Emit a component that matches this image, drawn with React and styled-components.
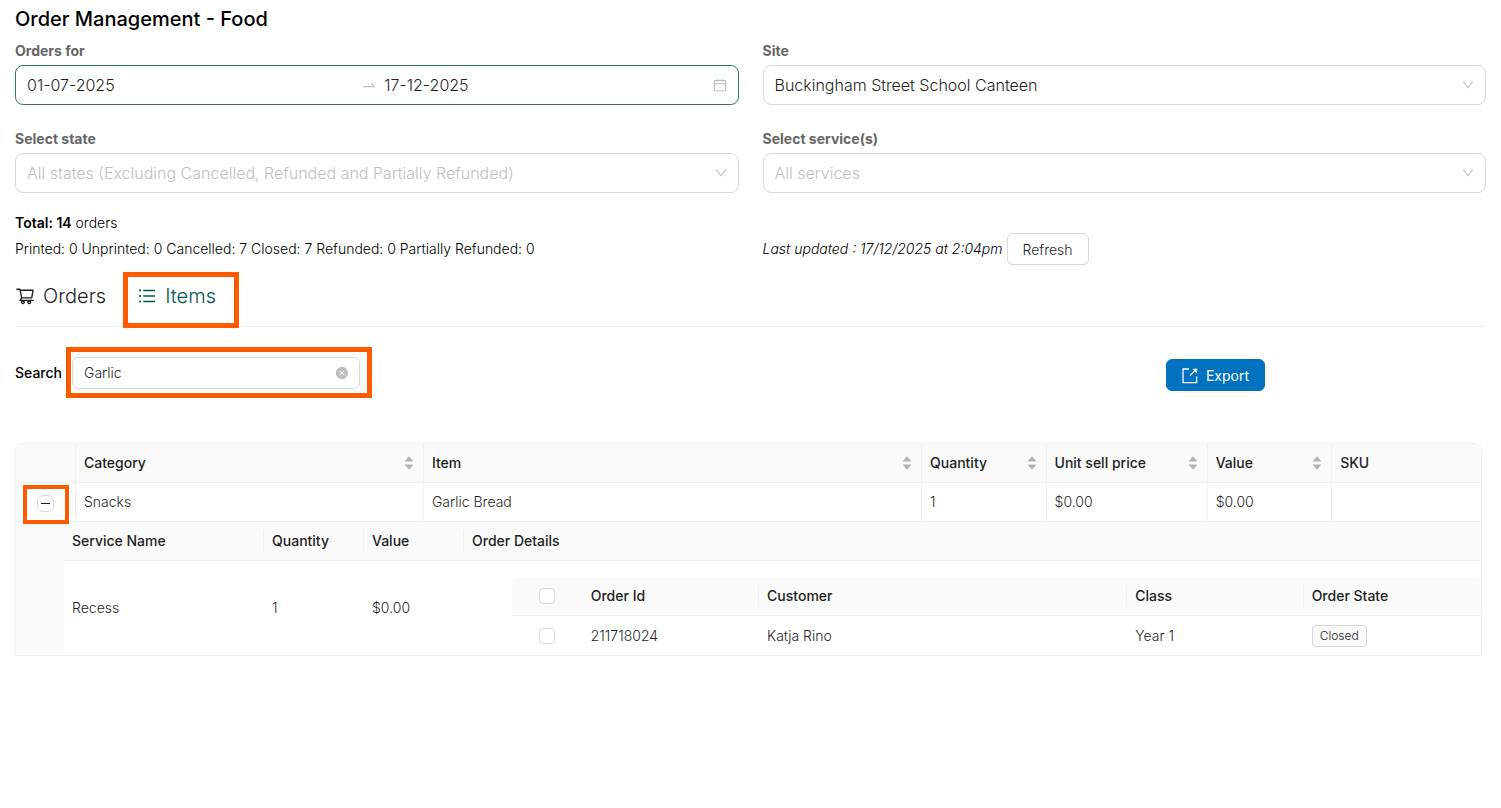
import React, { useState } from 'react';
import styled, { createGlobalStyle } from 'styled-components';
import {
  AiFillCaretDown,
  AiFillCaretUp,
  AiFillCloseCircle,
  AiOutlineCalendar,
  AiOutlineDown,
  AiOutlineShoppingCart,
  AiOutlineSwapRight,
  AiOutlineUnorderedList,
} from 'react-icons/ai';

const GlobalStyle = createGlobalStyle`
  *, *::before, *::after {
    box-sizing: border-box;
  }

  body {
    margin: 0;
    background: #fff;
    color: #000;
    font-family: Inter, 'Open Sans', sans-serif;
    font-size: 14px;
    font-weight: 300;
    line-height: 22px;
  }

  button, input, select {
    font: inherit;
    color: inherit;
  }
`;

const Page = styled.main`
  padding: 4px 15px 24px;
`;

const Title = styled.h1`
  margin: 0;
  font-size: 20px;
  font-weight: 500;
  line-height: 30px;
`;

const Filters = styled.div`
  display: grid;
  grid-template-columns: 1fr 1fr;
  gap: 20px 24px;
  padding-top: 3px;
`;

const Field = styled.div`
  display: flex;
  flex-direction: column;
`;

const FieldLabel = styled.label`
  padding: 3px 0;
  color: #666;
  font-weight: 700;
`;

const Control = styled.div`
  display: flex;
  align-items: center;
  height: 40px;
  padding: 0 10px 0 11px;
  border: 1px solid ${({ $active }) => ($active ? '#33786f' : '#d9d9d9')};
  border-radius: 8px;
  color: ${({ $placeholder }) => ($placeholder ? '#bfbfbf' : '#1f1f1f')};
  font-size: 16px;

  > svg {
    flex: none;
    color: #bfbfbf;
  }
`;

const PlainInput = styled.input`
  flex: 1;
  min-width: 0;
  padding: 0;
  border: 0;
  outline: 0;
  background: transparent;
`;

const SelectBox = styled.select`
  flex: 1;
  min-width: 0;
  height: 100%;
  padding: 0;
  border: 0;
  outline: 0;
  background: transparent;
  appearance: none;
`;

const RangeArrow = styled.span`
  display: flex;
  padding: 0 7px;
  color: #bfbfbf;
`;

const Summary = styled.div`
  display: grid;
  grid-template-columns: 1fr 1fr;
  gap: 24px;
  align-items: start;
  padding-top: 17px;

  p {
    margin: 0;
    line-height: 26px;
  }

  strong {
    font-weight: 600;
  }
`;

const Updated = styled.div`
  display: flex;
  align-items: center;
  gap: 4px;
  padding-top: 23px;
`;

const Button = styled.button`
  display: flex;
  align-items: center;
  gap: 8px;
  height: 32px;
  padding: 1px 15px 0;
  border: 1px solid ${({ $primary }) => ($primary ? '#0072c0' : '#d9d9d9')};
  border-radius: 6px;
  background: ${({ $primary }) => ($primary ? '#0072c0' : '#fff')};
  color: ${({ $primary }) => ($primary ? '#fff' : '#1f1f1f')};
  font-weight: ${({ $primary }) => ($primary ? 400 : 300)};
  box-shadow: 0 2px 0 rgba(0, 0, 0, 0.02);
  cursor: pointer;
`;

const Tabs = styled.div`
  display: flex;
  gap: 31px;
  height: 62px;
  border-bottom: 1px solid #f0f0f0;
`;

const Tab = styled.button`
  position: relative;
  display: flex;
  align-items: center;
  gap: 8px;
  padding: 1px 0 0;
  border: 0;
  background: none;
  color: ${({ $selected }) => ($selected ? '#005850' : '#1f1f1f')};
  font-size: 20px;
  cursor: pointer;
`;

const Highlight = styled.span`
  position: absolute;
  z-index: 1;
  inset: ${({ $inset }) => $inset};
  border: ${({ $thin }) => ($thin ? 4 : 5)}px solid #ff5a00;
  pointer-events: none;
`;

const Toolbar = styled.div`
  display: flex;
  align-items: flex-end;
  justify-content: space-between;
  padding: 30px 221px 52px 0;
`;

const SearchGroup = styled.div`
  display: flex;
  align-items: center;
  gap: 10px;
  padding-bottom: 2px;

  label {
    font-weight: 500;
  }
`;

const SearchBox = styled.div`
  position: relative;
  display: flex;
  align-items: center;
  width: 288px;
  height: 32px;
  padding: 0 10px 0 11px;
  border: 1px solid #d9d9d9;
  border-radius: 6px;
  color: #1f1f1f;
`;

const ClearButton = styled.button`
  display: flex;
  padding: 0;
  border: 0;
  background: none;
  color: #bfbfbf;
  cursor: pointer;
`;

const TableFrame = styled.div`
  margin-right: 4px;
  border: 1px solid #f0f0f0;
  border-radius: 8px 8px 0 0;
  overflow: hidden;
`;

const Table = styled.table`
  width: 100%;
  border-collapse: separate;
  border-spacing: 0;
  table-layout: fixed;
  color: #1f1f1f;
`;

const HeadCell = styled.th`
  position: relative;
  height: 39px;
  padding: 0 8px;
  border-bottom: 1px solid #f0f0f0;
  background: #fafafa;
  font-weight: 500;
  text-align: ${({ $center }) => ($center ? 'center' : 'left')};

  ${({ $bordered }) => $bordered && 'border-right: 1px solid #f0f0f0;'}

  ${({ $divider }) =>
    $divider &&
    `&::after {
      content: '';
      position: absolute;
      top: 8px;
      right: 0;
      width: 1px;
      height: 22px;
      background: #f0f0f0;
    }`}
`;

const Cell = styled.td`
  height: 39px;
  padding: 0 8px;
  border-bottom: ${({ $last }) => ($last ? 0 : '1px solid #f0f0f0')};
  text-align: ${({ $center }) => ($center ? 'center' : 'left')};

  ${({ $bordered }) => $bordered && 'border-right: 1px solid #f0f0f0;'}
`;

const ExpandCell = styled(Cell)`
  position: relative;
`;

const ExpandedCell = styled.td`
  padding: 0 0 0 48px;
  background: #fafafa;
`;

const DetailsCell = styled.td`
  padding: 16px 0 0 48px;
`;

const NestedTable = styled(Table)`
  background: #fff;
`;

const OrdersTable = styled(Table)`
  th:first-child {
    border-top-left-radius: 8px;
  }

  th:last-child {
    border-top-right-radius: 8px;
  }
`;

const SortHead = styled.span`
  display: flex;
  align-items: center;
  justify-content: space-between;
`;

const SortArrows = styled.span`
  display: flex;
  flex-direction: column;
  align-items: center;
  color: #b3b3b3;

  svg + svg {
    margin-top: -4px;
  }
`;

const ExpandButton = styled.button`
  display: flex;
  align-items: center;
  justify-content: center;
  width: 17px;
  height: 17px;
  margin: 2px auto 0;
  padding: 0;
  border: 1px solid #d9d9d9;
  border-radius: 6px;
  background: #fff;
  cursor: pointer;

  &::before {
    content: '';
    width: 9px;
    height: 1px;
    background: #1f1f1f;
  }
`;

const Checkbox = styled.input.attrs({ type: 'checkbox' })`
  display: block;
  width: 16px;
  height: 16px;
  margin: 0 auto;
  border: 1px solid #d9d9d9;
  border-radius: 4px;
  background: #fff;
  appearance: none;

  &:checked {
    border-color: #33786f;
    background: #33786f;
  }
`;

const Tag = styled.span`
  display: inline-block;
  padding: 0 7px;
  border: 1px solid #d9d9d9;
  border-radius: 4px;
  background: #fafafa;
  font-size: 12px;
  line-height: 20px;
`;

const columns = [
  { title: 'Category', width: '23.75%' },
  { title: 'Item', width: '34%' },
  { title: 'Quantity', width: '8.5%' },
  { title: 'Unit sell price', width: '11%' },
  { title: 'Value', width: '8.5%' },
];

const item = ['Snacks', 'Garlic Bread', '1', '$0.00', '$0.00'];

const ExportIcon = () => (
  <svg width="16" height="16" viewBox="0 0 16 16" fill="none" stroke="currentColor" strokeWidth="1.3">
    <path d="M7 1H1v13.6h13.6V8.6" />
    <path d="M8 7.6l5-5" />
    <path d="M10.4 1l5-.6-.6 5z" fill="currentColor" stroke="none" />
  </svg>
);

const OrdersForService = () => (
  <OrdersTable>
    <colgroup>
      <col style={{ width: '7.3%' }} />
      <col style={{ width: '18.2%' }} />
      <col style={{ width: '38%' }} />
      <col style={{ width: '18.2%' }} />
      <col />
    </colgroup>
    <thead>
      <tr>
        <HeadCell $center>
          <Checkbox aria-label="Select all orders" />
        </HeadCell>
        <HeadCell $divider>Order Id</HeadCell>
        <HeadCell $divider>Customer</HeadCell>
        <HeadCell $divider>Class</HeadCell>
        <HeadCell>Order State</HeadCell>
      </tr>
    </thead>
    <tbody>
      <tr>
        <Cell $center $last>
          <Checkbox aria-label="Select order 211718024" />
        </Cell>
        <Cell $last>211718024</Cell>
        <Cell $last>Katja Rino</Cell>
        <Cell $last>Year 1</Cell>
        <Cell $last>
          <Tag>Closed</Tag>
        </Cell>
      </tr>
    </tbody>
  </OrdersTable>
);

const ServiceTable = () => (
  <NestedTable>
    <colgroup>
      <col style={{ width: 200 }} />
      <col style={{ width: 100 }} />
      <col style={{ width: 100 }} />
      <col />
    </colgroup>
    <thead>
      <tr>
        <HeadCell $divider>Service Name</HeadCell>
        <HeadCell $divider>Quantity</HeadCell>
        <HeadCell $divider>Value</HeadCell>
        <HeadCell>Order Details</HeadCell>
      </tr>
    </thead>
    <tbody>
      <tr>
        <Cell $last>Recess</Cell>
        <Cell $last>1</Cell>
        <Cell $last>$0.00</Cell>
        <DetailsCell>
          <OrdersForService />
        </DetailsCell>
      </tr>
    </tbody>
  </NestedTable>
);

const App = () => {
  const [search, setSearch] = useState('Garlic');
  const [expanded, setExpanded] = useState(true);

  return (
    <Page>
      <GlobalStyle />
      <Title>Order Management - Food</Title>

      <Filters>
        <Field>
          <FieldLabel htmlFor="from">Orders for</FieldLabel>
          <Control $active>
            <PlainInput id="from" defaultValue="01-07-2025" />
            <RangeArrow>
              <AiOutlineSwapRight size={16} />
            </RangeArrow>
            <PlainInput aria-label="Orders to" defaultValue="17-12-2025" />
            <AiOutlineCalendar size={16} />
          </Control>
        </Field>
        <Field>
          <FieldLabel htmlFor="site">Site</FieldLabel>
          <Control>
            <SelectBox id="site">
              <option>Buckingham Street School Canteen</option>
            </SelectBox>
            <AiOutlineDown size={14} />
          </Control>
        </Field>
        <Field>
          <FieldLabel htmlFor="state">Select state</FieldLabel>
          <Control $placeholder>
            <SelectBox id="state">
              <option>All states (Excluding Cancelled, Refunded and Partially Refunded)</option>
            </SelectBox>
            <AiOutlineDown size={14} />
          </Control>
        </Field>
        <Field>
          <FieldLabel htmlFor="services">Select service(s)</FieldLabel>
          <Control $placeholder>
            <SelectBox id="services">
              <option>All services</option>
            </SelectBox>
            <AiOutlineDown size={14} />
          </Control>
        </Field>
      </Filters>

      <Summary>
        <div>
          <p>
            <strong>Total: 14</strong> orders
          </p>
          <p>Printed: 0 Unprinted: 0 Cancelled: 7 Closed: 7 Refunded: 0 Partially Refunded: 0</p>
        </div>
        <Updated>
          <em>Last updated : 17/12/2025 at 2:04pm</em>
          <Button type="button">Refresh</Button>
        </Updated>
      </Summary>

      <Tabs role="tablist">
        <Tab type="button" role="tab" aria-selected="false">
          <AiOutlineShoppingCart size={20} />
          Orders
        </Tab>
        <Tab type="button" role="tab" aria-selected="true" $selected>
          <AiOutlineUnorderedList size={20} />
          Items
          <Highlight $inset="7px -23px -2px -14px" />
        </Tab>
      </Tabs>

      <Toolbar>
        <SearchGroup>
          <label htmlFor="search">Search</label>
          <SearchBox>
            <PlainInput id="search" value={search} onChange={(e) => setSearch(e.target.value)} />
            <ClearButton type="button" aria-label="Clear search" onClick={() => setSearch('')}>
              <AiFillCloseCircle size={14} />
            </ClearButton>
            <Highlight $inset="-11px -13px -10px -7px" />
          </SearchBox>
        </SearchGroup>
        <Button type="button" $primary>
          <ExportIcon />
          Export
        </Button>
      </Toolbar>

      <TableFrame>
        <Table>
          <colgroup>
            <col style={{ width: 60 }} />
            {columns.map((column) => (
              <col key={column.title} style={{ width: column.width }} />
            ))}
            <col />
          </colgroup>
          <thead>
            <tr>
              <HeadCell $bordered />
              {columns.map((column) => (
                <HeadCell key={column.title} $bordered>
                  <SortHead>
                    {column.title}
                    <SortArrows>
                      <AiFillCaretUp size={12} />
                      <AiFillCaretDown size={12} />
                    </SortArrows>
                  </SortHead>
                </HeadCell>
              ))}
              <HeadCell>SKU</HeadCell>
            </tr>
          </thead>
          <tbody>
            <tr>
              <ExpandCell $bordered>
                <ExpandButton
                  type="button"
                  aria-label="Toggle row"
                  aria-expanded={expanded}
                  onClick={() => setExpanded(!expanded)}
                />
                <Highlight $thin $inset="2px 6px -3px 7px" />
              </ExpandCell>
              {item.map((value, index) => (
                <Cell key={index} $bordered>
                  {value}
                </Cell>
              ))}
              <Cell />
            </tr>
            {expanded && (
              <tr>
                <ExpandedCell colSpan={7}>
                  <ServiceTable />
                </ExpandedCell>
              </tr>
            )}
          </tbody>
        </Table>
      </TableFrame>
    </Page>
  );
};

export default App;
